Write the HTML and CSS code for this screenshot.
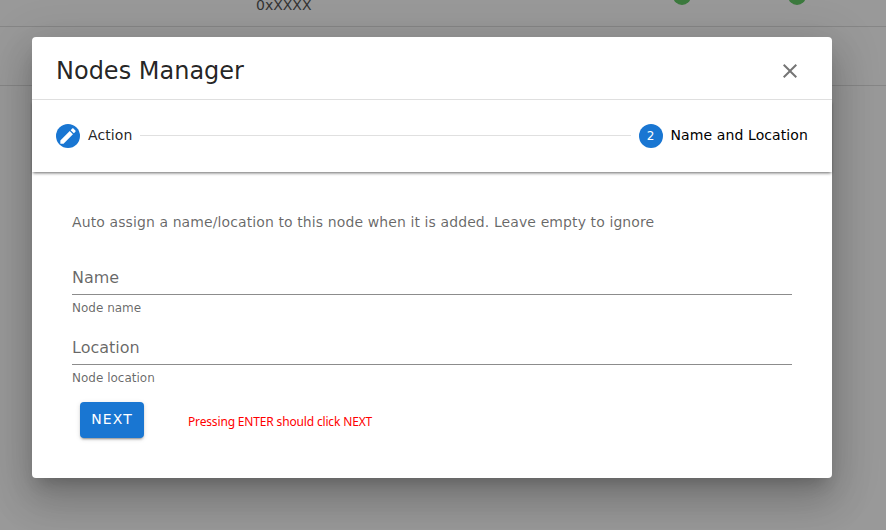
FILE: index.html
```html
<!DOCTYPE html>
<html lang="en">
<head>
    <meta charset="UTF-8">
    <meta name="viewport" content="width=device-width, initial-scale=1.0">
    <title>Nodes Manager</title>
    <link rel="stylesheet" href="styles.css">
</head>
<body>
    <div class="page">
        <div class="table-row">
            <span class="node-id">0xXXXX</span>
            <span class="status-dot first"></span>
            <span class="status-dot second"></span>
        </div>
        <div class="table-header"></div>
    </div>

    <div class="dialog">
        <div class="dialog-title">
            <h2>Nodes Manager</h2>
            <button class="close-btn" aria-label="Close">
                <svg viewBox="0 0 24 24" width="24" height="24"><path d="M19 6.41L17.59 5 12 10.59 6.41 5 5 6.41 10.59 12 5 17.59 6.41 19 12 13.41 17.59 19 19 17.59 13.41 12z"/></svg>
            </button>
        </div>

        <div class="stepper">
            <div class="step">
                <svg class="step-icon" viewBox="0 0 24 24" width="24" height="24"><circle cx="12" cy="12" r="12" fill="#1976d2"/><path fill="#fff" transform="translate(12 12) scale(.85) translate(-12 -12)" d="M3 17.25V21h3.75L17.81 9.94l-3.75-3.75L3 17.25zM20.71 7.04c.39-.39.39-1.02 0-1.41l-2.34-2.34c-.39-.39-1.02-.39-1.41 0l-1.83 1.83 3.75 3.75 1.83-1.83z"/></svg>
                <span class="step-label">Action</span>
            </div>
            <div class="step-line"></div>
            <div class="step">
                <span class="step-num">2</span>
                <span class="step-label active">Name and Location</span>
            </div>
        </div>

        <div class="content">
            <p class="intro">Auto assign a name/location to this node when it is added. Leave empty to ignore</p>

            <div class="field">
                <div class="field-input">Name</div>
                <div class="field-hint">Node name</div>
            </div>

            <div class="field">
                <div class="field-input">Location</div>
                <div class="field-hint">Node location</div>
            </div>

            <div class="actions">
                <button class="next-btn">NEXT</button>
                <span class="warning">Pressing ENTER should click NEXT</span>
            </div>
        </div>
    </div>
</body>
</html>
```

FILE: styles.css
```css
* {
    margin: 0;
    padding: 0;
    box-sizing: border-box;
}

html, body {
    height: 100%;
    overflow: hidden;
}

body {
    font-family: "DejaVu Sans", sans-serif;
    background: #999999;
    color: rgba(0,0,0,0.87);
}

/* page behind the dialog */
.page {
    height: 100%;
}

.table-row {
    position: relative;
    height: 27px;
    border-bottom: 1px solid #868686;
}

.node-id {
    position: absolute;
    left: 256px;
    top: -5px;
    font-size: 14px;
    line-height: 20px;
    color: #333;
}

.status-dot {
    position: absolute;
    top: -13px;
    width: 18px;
    height: 18px;
    border-radius: 50%;
    background: #3c7a3e;
}

.status-dot.first {
    left: 673px;
}

.status-dot.second {
    left: 788px;
}

.table-header {
    height: 59px;
    border-bottom: 1px solid #868686;
}

.dialog {
    position: absolute;
    left: 32px;
    top: 37px;
    width: 800px;
    height: 441px;
    background: white;
    border-radius: 4px;
    box-shadow: 0 11px 15px -7px rgba(0,0,0,0.2), 0 24px 38px 3px rgba(0,0,0,0.14), 0 9px 46px 8px rgba(0,0,0,0.12);
}

.dialog-title {
    height: 63px;
    padding: 6px 24px 0;
    display: flex;
    align-items: center;
    justify-content: space-between;
    border-bottom: 1px solid #e0e0e0;
}

.dialog-title h2 {
    font-size: 24px;
    font-weight: 400;
    color: rgba(0,0,0,0.87);
}

.close-btn {
    width: 24px;
    height: 24px;
    margin-right: 6px;
    background: none;
    border: none;
    fill: #757575;
}

.stepper {
    height: 72px;
    padding: 0 24px;
    display: flex;
    align-items: center;
    box-shadow: 0 2px 3px -1px rgba(0,0,0,0.6);
}

.step {
    display: flex;
    align-items: center;
    gap: 8px;
}

.step-line {
    flex: 1;
    height: 1px;
    margin: 0 8px 1px;
    background: #e0e0e0;
}

.step-icon {
    display: block;
}

.step-num {
    width: 24px;
    height: 24px;
    border-radius: 50%;
    background: #1976d2;
    color: white;
    font-size: 12px;
    line-height: 24px;
    text-align: center;
}

.step-label {
    padding-bottom: 2px;
    font-size: 14px;
    letter-spacing: 0.1px;
    color: rgba(0,0,0,0.87);
}

.step-label.active {
    color: black;
}

.content {
    padding: 40px 40px 0;
}

.intro {
    font-size: 14px;
    line-height: 20px;
    letter-spacing: 0.1px;
    color: rgba(0,0,0,0.6);
    margin-bottom: 26px;
}

.field {
    margin-bottom: 12px;
}

.field-input {
    height: 37px;
    padding-top: 4px;
    font-size: 16px;
    line-height: 32px;
    color: rgba(0,0,0,0.6);
    border-bottom: 1px solid #8c8c8c;
}

.field-hint {
    margin-top: 5px;
    font-size: 12px;
    line-height: 16px;
    color: rgba(0,0,0,0.6);
}

.actions {
    display: flex;
    align-items: center;
    padding-left: 8px;
    margin-top: 16px;
}

.next-btn {
    width: 64px;
    height: 36px;
    padding-bottom: 2px;
    background: #1976d2;
    color: white;
    border: none;
    border-radius: 4px;
    font-family: "DejaVu Sans", sans-serif;
    font-size: 14px;
    letter-spacing: 1.1px;
    box-shadow: 0 3px 1px -2px rgba(0,0,0,0.2), 0 2px 2px rgba(0,0,0,0.14), 0 1px 5px rgba(0,0,0,0.12);
}

.warning {
    margin-left: 44px;
    margin-top: 2px;
    font-family: "Noto Sans", sans-serif;
    font-size: 12px;
    letter-spacing: -0.16px;
    color: red;
}
```
